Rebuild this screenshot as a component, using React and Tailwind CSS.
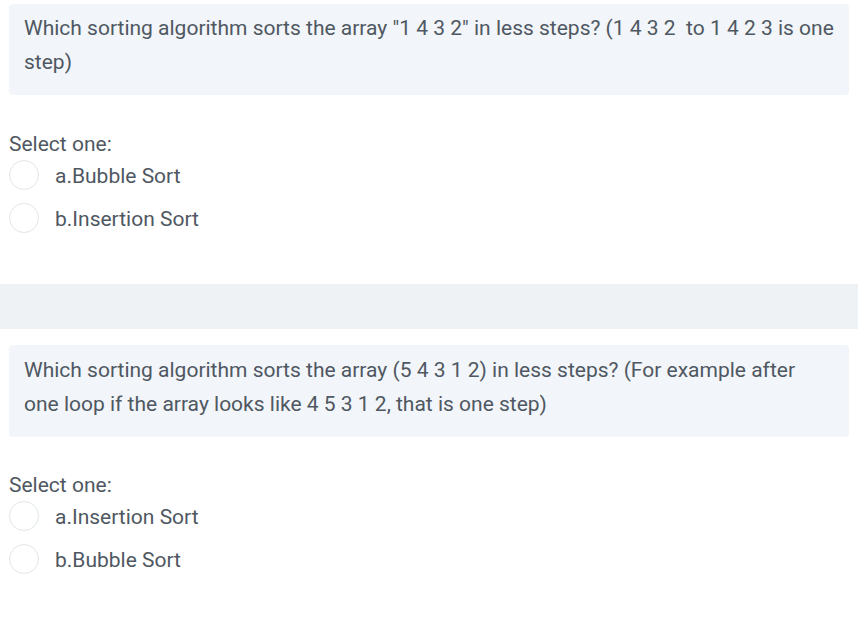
const questions = [
  {
    text: 'Which sorting algorithm sorts the array "1 4 3 2" in less steps? (1 4 3 2\u00a0 to 1 4 2 3 is one step)',
    options: ['a.Bubble Sort', 'b.Insertion Sort'],
  },
  {
    text: 'Which sorting algorithm sorts the array (5 4 3 1 2) in less steps? (For example after one loop if the array looks like 4 5 3 1 2, that is one step)',
    options: ['a.Insertion Sort', 'b.Bubble Sort'],
  },
]

function Question({ q, top }) {
  return (
    <div className="px-[9px]">
      <div className={`bg-[#f2f5f9] rounded-[4px] pl-[15px] pb-[16px] text-[21px] leading-[34px] ${top ? 'pt-[7px] pr-[12px]' : 'pt-[8px] pr-[24px]'}`}>
        {q.text}
      </div>
      <div className={`h-[24px] leading-[24px] text-[21px] ${top ? 'mt-[37px]' : 'mt-[36px]'}`}>Select one:</div>
      {q.options.map(o => (
        <div key={o} className="flex items-start h-[43px]">
          <div className="w-[30px] h-[30px] mt-[4px] rounded-full border border-[#dfe6e8] bg-white shrink-0" />
          <span className="ml-[16px] text-[21px] leading-[41px]">{o}</span>
        </div>
      ))}
    </div>
  )
}

export default function App() {
  return (
    <div className="w-[858px] h-[622px] bg-white text-[#4f5862] pt-[4px] overflow-hidden" style={{ fontFamily: 'Roboto, sans-serif' }}>
      <Question q={questions[0]} top />
      <div className="mt-[42px] h-[45px] bg-[#eff2f4]" />
      <div className="mt-[16px]">
        <Question q={questions[1]} />
      </div>
    </div>
  )
}
